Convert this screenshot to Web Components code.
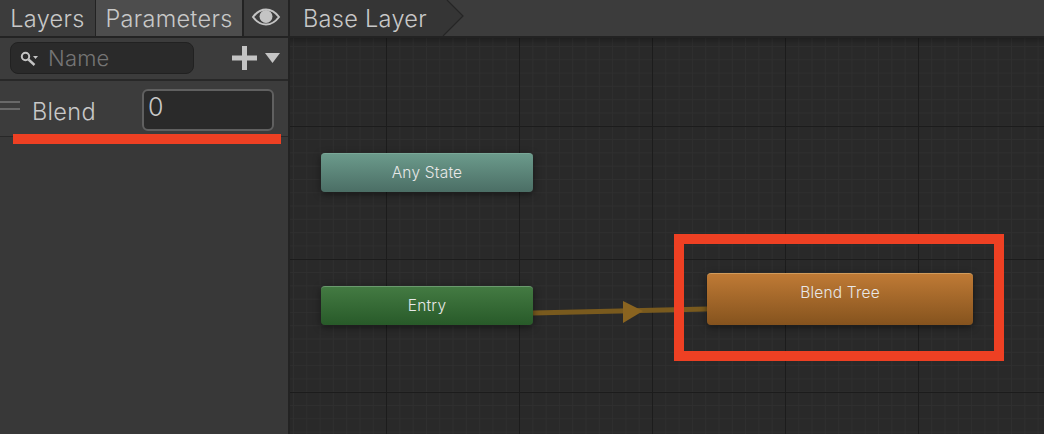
<!DOCTYPE html>
<html lang="en">
<head>
    <meta charset="UTF-8">
    <title>Animator</title>
    <style>
        html, body { margin: 0; padding: 0; background: #383838; }
        body { width: 1044px; height: 434px; overflow: hidden; font-family: Inter, "Liberation Sans", sans-serif; font-weight: 300; }
    </style>
</head>
<body>
    <animator-window>
        <side-panel slot="side">
            <tab-bar>
                <tab-button style="width:95px">Layers</tab-button>
                <tab-button active style="width:146px">Parameters</tab-button>
                <eye-button></eye-button>
            </tab-bar>
            <search-row></search-row>
            <param-row name="Blend" value="0"></param-row>
        </side-panel>
        <bread-crumb slot="crumb">Base Layer</bread-crumb>
        <graph-canvas slot="canvas">
            <state-node kind="any" style="left:31px;top:115px;width:212px;height:39px">Any State</state-node>
            <state-node kind="entry" style="left:31px;top:248px;width:212px;height:39px">Entry</state-node>
            <state-node kind="blend" style="left:417px;top:235px;width:266px;height:52px;padding-bottom:14px">Blend Tree</state-node>
        </graph-canvas>
    </animator-window>

    <script>
        function shadow(el, html) {
            el.attachShadow({ mode: 'open' }).innerHTML = html;
        }

        class AnimatorWindow extends HTMLElement {
            constructor() {
                super();
                shadow(this, `
                    <style>
                        :host { display: grid; grid-template-columns: 288px 2px 1fr; grid-template-rows: 36px 2px 396px; width: 1044px; height: 434px; background: #222; }
                        .side { grid-column: 1; grid-row: 1 / 4; display: block; }
                        .crumb { grid-column: 3; grid-row: 1; }
                        .canvas { grid-column: 3; grid-row: 3; }
                        .rule { grid-column: 2; grid-row: 1 / 4; background: #232323; }
                        .hr { grid-column: 3; grid-row: 2; background: #232323; }
                        ::slotted(*) { min-width: 0; }
                    </style>
                    <div class="side"><slot name="side"></slot></div>
                    <div class="rule"></div>
                    <div class="crumb"><slot name="crumb"></slot></div>
                    <div class="hr"></div>
                    <div class="canvas"><slot name="canvas"></slot></div>`);
            }
        }

        class SidePanel extends HTMLElement {
            constructor() {
                super();
                shadow(this, `
                    <style>:host { display: flex; flex-direction: column; width: 288px; height: 434px; background: #383838; }</style>
                    <slot></slot>`);
            }
        }

        class TabBar extends HTMLElement {
            constructor() {
                super();
                shadow(this, `
                    <style>:host { display: flex; gap: 1px; height: 36px; background: #232323; border-bottom: 2px solid #232323; }</style>
                    <slot></slot>`);
            }
        }

        class TabButton extends HTMLElement {
            constructor() {
                super();
                shadow(this, `
                    <style>
                        :host { display: flex; align-items: center; justify-content: center; height: 36px; background: #3c3c3c; color: #c8c8c8; font-size: 23.5px; letter-spacing: .3px; box-sizing: border-box; }
                        :host([active]) { background: #4d4d4d; }
                    </style>
                    <slot></slot>`);
            }
        }

        class EyeButton extends HTMLElement {
            constructor() {
                super();
                shadow(this, `
                    <style>
                        :host { display: flex; align-items: center; justify-content: center; width: 44px; height: 36px; margin-left: 1px; background: #3c3c3c; }
                        svg { display: block; margin-top: -2px; }
                    </style>
                    <svg width="30" height="20" viewBox="0 0 30 20">
                        <path d="M2 10C6 4.600 10 2.500 15 2.500S24 4.600 28 10C24 15.400 20 17.500 15 17.500S6 15.400 2 10Z" fill="none" stroke="#c4c4c4" stroke-width="2"/>
                        <circle cx="15" cy="9.500" r="6.500" fill="#c4c4c4"/>
                    </svg>`);
            }
        }

        class SearchRow extends HTMLElement {
            constructor() {
                super();
                shadow(this, `
                    <style>
                        :host { display: flex; align-items: center; height: 43px; padding: 0 8px 2px 10px; box-sizing: border-box; background: #3c3c3c; border-bottom: 2px solid #282828; }
                        .field { display: flex; align-items: center; gap: 10px; width: 184px; height: 32px; padding-left: 9px; box-sizing: border-box; background: #2a2a2a; border: 1px solid #212121; border-radius: 8px; color: #757575; font-size: 22px; letter-spacing: .2px; }
                        .add { display: flex; align-items: center; gap: 8px; margin-left: auto; }
                        svg { display: block; }
                    </style>
                    <div class="field">
                        <svg width="18" height="18" viewBox="0 0 18 18">
                            <circle cx="5.500" cy="7.500" r="3.700" fill="none" stroke="#c4c4c4" stroke-width="2"/>
                            <path d="M8.500 10.500L14.500 16" stroke="#c4c4c4" stroke-width="2.400"/>
                            <path d="M13 7H18L15.500 10Z" fill="#c4c4c4"/>
                        </svg>
                        <span>Name</span>
                    </div>
                    <div class="add">
                        <svg width="25" height="24" viewBox="0 0 25 24"><path d="M10 0H15V9.500H25V14.500H15V24H10V14.500H0V9.500H10Z" fill="#c4c4c4"/></svg>
                        <svg width="15" height="10" viewBox="0 0 15 10"><path d="M0 0H15L7.500 10Z" fill="#c4c4c4"/></svg>
                    </div>`);
            }
        }

        class ParamRow extends HTMLElement {
            constructor() {
                super();
                shadow(this, `
                    <style>
                        :host { display: block; position: relative; height: 56px; background: #3c3c3c; border-bottom: 1px solid #282828; box-sizing: border-box; }
                        .row { display: flex; align-items: center; height: 55px; color: #c8c8c8; font-size: 23.5px; letter-spacing: .3px; }
                        .grip { width: 20px; height: 5px; border-top: 2px solid #696969; border-bottom: 2px solid #696969; margin-top: -6px; }
                        .name { margin-left: 12px; width: 110px; padding-top: 6px; }
                        .value { width: 132px; height: 42px; margin-top: 3px; padding: 0 0 6px 4px; box-sizing: border-box; display: flex; align-items: center; background: #2a2a2a; border: 2px solid #606060; border-radius: 6px; font-size: 25px; }
                        .mark { position: absolute; left: 13px; top: 53px; width: 268px; height: 10px; background: #ee4023; }
                    </style>
                    <div class="row">
                        <div class="grip"></div>
                        <div class="name"></div>
                        <div class="value"></div>
                    </div>
                    <div class="mark"></div>`);
                this.shadowRoot.querySelector('.name').textContent = this.getAttribute('name');
                this.shadowRoot.querySelector('.value').textContent = this.getAttribute('value');
            }
        }

        class BreadCrumb extends HTMLElement {
            constructor() {
                super();
                shadow(this, `
                    <style>
                        :host { display: block; position: relative; height: 36px; background: #3c3c3c; color: #c8c8c8; font-size: 23.5px; letter-spacing: .3px; }
                        svg { position: absolute; left: 0; top: 0; }
                        span { position: relative; display: flex; align-items: center; height: 36px; padding-left: 13px; }
                    </style>
                    <svg width="180" height="36" viewBox="0 0 180 36">
                        <path d="M0 0H157L173 16L153 36H0Z" fill="#353535"/>
                        <path d="M157 0L173 16L153 36" fill="none" stroke="#262626" stroke-width="1.200"/>
                    </svg>
                    <span><slot></slot></span>`);
            }
        }

        class GraphCanvas extends HTMLElement {
            constructor() {
                super();
                shadow(this, `
                    <style>
                        :host {
                            display: block; position: relative; width: 754px; height: 396px; overflow: hidden;
                            background-color: #292929;
                            background-image:
                                linear-gradient(#1c1c1c 1px, transparent 1px),
                                linear-gradient(90deg, #1c1c1c 1px, transparent 1px),
                                linear-gradient(#2f2f2f 1px, transparent 1px),
                                linear-gradient(90deg, #2f2f2f 1px, transparent 1px);
                            background-size: 133px 133px, 133px 133px, 13.300px 13.300px, 13.300px 13.300px;
                            background-position: 0 88px, 96px 0, 0 8px, 3px 0;
                            box-shadow: inset 0 7px 6px -5px rgba(0,0,0,.3);
                        }
                        svg { position: absolute; left: 0; top: 0; }
                        .box { position: absolute; left: 384px; top: 196px; width: 330px; height: 127px; border: 10px solid #ee4023; box-sizing: border-box; }
                    </style>
                    <svg width="754" height="396" viewBox="0 0 754 396">
                        <path d="M243 275L417 271" stroke="#795a1e" stroke-width="5"/>
                        <path d="M333 263L353 273L333 285Z" fill="#8a6420"/>
                    </svg>
                    <slot></slot>
                    <div class="box"></div>`);
            }
        }

        const NODE_COLORS = {
            any: ['#7aa898', '#6b9a8b', '#4b6e65'],
            entry: ['#6a9a6e', '#437a42', '#285a29'],
            blend: ['#d19c5c', '#bf7a35', '#85531e']
        };

        class StateNode extends HTMLElement {
            constructor() {
                super();
                const c = NODE_COLORS[this.getAttribute('kind')];
                shadow(this, `
                    <style>
                        :host {
                            position: absolute; display: flex; align-items: center; justify-content: center; box-sizing: border-box;
                            padding-bottom: 2px; border-radius: 4px; border-top: 1px solid ${c[0]};
                            background: linear-gradient(${c[1]}, ${c[2]});
                            box-shadow: 0 2px 7px rgba(0,0,0,.5);
                            color: #e8e8e8; font-size: 15.500px; letter-spacing: .2px;
                        }
                    </style>
                    <slot></slot>`);
            }
        }

        customElements.define('animator-window', AnimatorWindow);
        customElements.define('side-panel', SidePanel);
        customElements.define('tab-bar', TabBar);
        customElements.define('tab-button', TabButton);
        customElements.define('eye-button', EyeButton);
        customElements.define('search-row', SearchRow);
        customElements.define('param-row', ParamRow);
        customElements.define('bread-crumb', BreadCrumb);
        customElements.define('graph-canvas', GraphCanvas);
        customElements.define('state-node', StateNode);
    </script>
</body>
</html>
